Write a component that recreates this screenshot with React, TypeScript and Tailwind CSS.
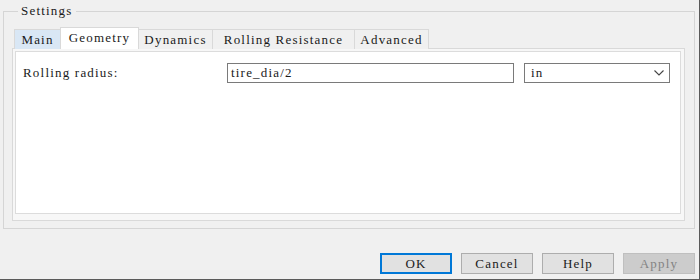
import React from "react";

const font = "font-[Liberation_Serif] text-[13px] tracking-[1.2px] text-[#1a1a1a]";

const tabs = [
  { name: "Main", w: "w-[47px]", state: "hover" },
  { name: "Geometry", w: "w-[79px]", state: "active" },
  { name: "Dynamics", w: "w-[75px]", state: "" },
  { name: "Rolling Resistance", w: "w-[143px]", state: "" },
  { name: "Advanced", w: "w-[75px]", state: "" },
];

const Tab = ({ name, w, state, first }: { name: string; w: string; state: string; first: boolean }) => {
  if (state === "active") {
    return (
      <div
        className={`${w} ${first ? "" : "-ml-px"} relative z-10 h-[22px] bg-white border border-b-0 border-[#d9d9d9] flex items-center justify-center pb-[1px]`}
      >
        {name}
      </div>
    );
  }
  return (
    <div
      className={`${w} ${first ? "" : "-ml-px"} h-[20px] border border-b-0 border-[#d9d9d9] flex items-center justify-center ${
        state === "hover" ? "bg-[#d9e7f5]" : "bg-[#f0f0f0]"
      }`}
    >
      {name}
    </div>
  );
};

const Button = ({ label, primary, disabled }: { label: string; primary?: boolean; disabled?: boolean }) => (
  <button
    className={`w-[72px] h-[21px] flex items-center justify-center leading-none ${
      primary
        ? "border-2 border-[#0078d7] bg-[#e1e1e1]"
        : disabled
        ? "border border-[#bfbfbf] bg-[#cccccc] text-[#838383]"
        : "border border-[#adadad] bg-[#e1e1e1]"
    }`}
  >
    {label}
  </button>
);

export default function App() {
  return (
    <div className={`w-[700px] h-[280px] bg-[#f0f0f0] border-r border-b border-[#5a5a5a] flex flex-col ${font}`}>
      <fieldset className="ml-[3px] mt-[3px] w-[692px] border border-[#d5d5d5] pl-[8px] pt-[8px] pb-[7px]">
        <legend className="ml-[6px] px-[3px] leading-[16px]">Settings</legend>

        <div className="flex items-end h-[22px] ml-[2px]">
          {tabs.map((t, i) => (
            <Tab key={t.name} {...t} first={i === 0} />
          ))}
        </div>

        <div className="-mt-px w-[673px] h-[173px] bg-[#f7f7f7] border border-[#d9d9d9] pl-[2px] pt-[2px] pr-[3px] pb-[6px]">
          <div className="h-full bg-white border border-[#dcdcdc] pl-[7px] pt-[11px]">
            <div className="flex items-center h-[20px]">
              <span className="w-[204px]">Rolling radius:</span>
              <div className="w-[287px] h-[20px] border border-[#7a7a7a] bg-white flex items-center pl-[3px]">
                tire_dia/2
              </div>
              <div className="ml-[10px] w-[146px] h-[20px] border border-[#7a7a7a] bg-white flex items-center justify-between pl-[6px] pr-[3px]">
                <span>in</span>
                <svg width="12" height="8" viewBox="0 0 12 8" className="mr-[1px]">
                  <polyline points="1.5,1.5 6,6 10.5,1.5" fill="none" stroke="#444" strokeWidth="1.1" />
                </svg>
              </div>
            </div>
          </div>
        </div>
      </fieldset>

      <div className="mt-[24px] flex justify-end gap-[9px] pr-[4px]">
        <Button label="OK" primary />
        <Button label="Cancel" />
        <Button label="Help" />
        <Button label="Apply" disabled />
      </div>
    </div>
  );
}
